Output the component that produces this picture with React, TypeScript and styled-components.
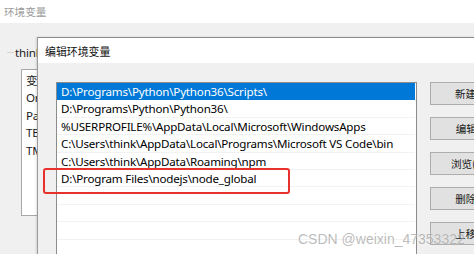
import React from 'react'
import styled, { createGlobalStyle } from 'styled-components'

const GlobalStyle = createGlobalStyle`
  html, body {
    margin: 0;
    padding: 0;
    width: 474px;
    height: 254px;
    overflow: hidden;
    background: #ffffff;
  }
  body {
    font-family: "Noto Sans", "Noto Sans CJK SC", sans-serif;
    font-size: 11.6px;
    letter-spacing: -0.2px;
    color: #000000;
  }
`

const Desktop = styled.div`
  position: relative;
  width: 474px;
  height: 254px;
  overflow: hidden;
`

// back window: 环境变量
const BackWindow = styled.div`
  display: flex;
  flex-direction: column;
  height: 100%;
`

const BackTitle = styled.div`
  height: 23px;
  flex: none;
  display: flex;
  align-items: center;
  padding-left: 4px;
  background: #ffffff;
  color: #9b9b9b;
  font-family: "Noto Sans CJK SC", sans-serif;
  font-size: 10.6px;
  letter-spacing: 0;
`

const BackBody = styled.div`
  flex: 1;
  background: #f0f0f0;
  padding: 21px 0 0 7px;
`

const GroupLegend = styled.div`
  display: flex;
  align-items: center;
  height: 16px;
  &::before {
    content: '';
    width: 7px;
    height: 1px;
    background: #d5d5d5;
    margin-right: 1px;
  }
`

const GroupLabel = styled.span`
  color: #1a1a1a;
  white-space: nowrap;
`

const BackList = styled.div`
  margin: 9px 0 0 14px;
  width: 200px;
  height: 147px;
  background: #ffffff;
  border: 1px solid #a8a8a8;
  padding-top: 2px;
  box-sizing: border-box;
`

const BackRow = styled.div`
  height: 17.4px;
  line-height: 17.4px;
  padding-left: 4px;
  color: #1a1a1a;
  white-space: nowrap;
`

// front dialog: 编辑环境变量
const Dialog = styled.div`
  position: absolute;
  left: 37px;
  top: 37px;
  width: 520px;
  height: 260px;
  display: flex;
  flex-direction: column;
  border-top: 1px solid #8a8a8a;
  border-left: 1px solid #9a9a9a;
  box-shadow: -1px 0 2px rgba(0, 0, 0, 0.12);
`

const DialogTitle = styled.div`
  height: 25px;
  flex: none;
  display: flex;
  align-items: center;
  padding-left: 7px;
  background: #ffffff;
  font-family: "Noto Sans CJK SC", sans-serif;
  font-size: 10.9px;
  letter-spacing: 0;
  color: #111111;
`

const DialogBody = styled.div`
  flex: 1;
  display: flex;
  gap: 13px;
  align-items: flex-start;
  padding: 19px 0 0 18px;
  background: #f0f0f0;
`

const ListBox = styled.div`
  position: relative;
  width: 361px;
  height: 200px;
  flex: none;
  box-sizing: border-box;
  background: #ffffff;
  border: 1px solid #8c8c8c;
  border-bottom: none;
  padding-right: 1px;
`

const Row = styled.div<{ $selected?: boolean }>`
  height: 17.4px;
  line-height: 17.4px;
  padding-left: 4px;
  white-space: nowrap;
  box-sizing: border-box;
  border-bottom: 1px solid ${({ $selected }) => ($selected ? '#0078d7' : '#f2f2f2')};
  background: ${({ $selected }) => ($selected ? '#0078d7' : 'transparent')};
  color: ${({ $selected }) => ($selected ? '#ffffff' : '#000000')};
`

const Highlight = styled.div`
  position: absolute;
  left: -14px;
  top: 85px;
  width: 247px;
  height: 26px;
  box-sizing: border-box;
  border: 2px solid #e8302c;
  border-radius: 3px;
`

const ButtonColumn = styled.div`
  display: flex;
  flex-direction: column;
  gap: 12px;
`

const Button = styled.div`
  width: 86px;
  height: 23px;
  box-sizing: border-box;
  display: flex;
  align-items: center;
  justify-content: center;
  background: #e1e1e1;
  border: 1px solid #adadad;
  font-family: "Noto Sans CJK SC", sans-serif;
  font-size: 10.6px;
  letter-spacing: 0;
  color: #1a1a1a;
  white-space: nowrap;
`

const Watermark = styled.div`
  position: absolute;
  left: 298px;
  top: 231px;
  font-family: "Liberation Sans", Arial, sans-serif;
  font-size: 14px;
  letter-spacing: 0;
  color: rgba(120, 120, 120, 0.5);
  text-shadow: 0 0 1px rgba(255, 255, 255, 0.7);
  white-space: nowrap;
`

const backRows = ['变量', 'OneDrive', 'Path', 'TEMP', 'TMP']

const paths = [
  'D:\\Programs\\Python\\Python36\\Scripts\\',
  'D:\\Programs\\Python\\Python36\\',
  '%USERPROFILE%\\AppData\\Local\\Microsoft\\WindowsApps',
  'C:\\Users\\think\\AppData\\Local\\Programs\\Microsoft VS Code\\bin',
  'C:\\Users\\think\\AppData\\Roaming\\npm',
  'D:\\Program Files\\nodejs\\node_global',
  '',
  '',
  '',
  '',
]

const buttons = ['新建(N)', '编辑(E)', '浏览(B)...', '删除(D)', '上移(U)']

export default function App() {
  return (
    <>
      <GlobalStyle />
      <Desktop>
        <BackWindow>
          <BackTitle>环境变量</BackTitle>
          <BackBody>
            <GroupLegend>
              <GroupLabel>think 的用户变量(U)</GroupLabel>
            </GroupLegend>
            <BackList>
              {backRows.map((r) => (
                <BackRow key={r}>{r}</BackRow>
              ))}
            </BackList>
          </BackBody>
        </BackWindow>

        <Dialog>
          <DialogTitle>编辑环境变量</DialogTitle>
          <DialogBody>
            <ListBox>
              {paths.map((p, i) => (
                <Row key={i} $selected={i === 0}>
                  {p}
                </Row>
              ))}
              <Highlight />
            </ListBox>
            <ButtonColumn>
              {buttons.map((b) => (
                <Button key={b}>{b}</Button>
              ))}
            </ButtonColumn>
          </DialogBody>
        </Dialog>

        <Watermark>CSDN @weixin_47353322</Watermark>
      </Desktop>
    </>
  )
}
